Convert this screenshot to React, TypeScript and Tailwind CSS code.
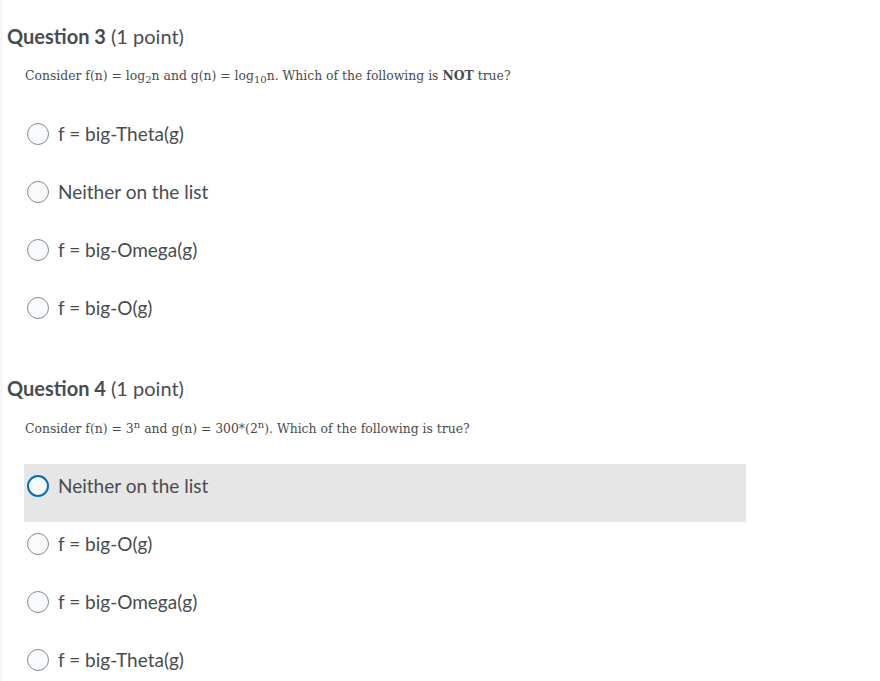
import React from "react";

type Opt = { label: string; selected?: boolean };

const q3: Opt[] = [
  { label: "f = big-Theta(g)" },
  { label: "Neither on the list" },
  { label: "f = big-Omega(g)" },
  { label: "f = big-O(g)" },
];

const q4: Opt[] = [
  { label: "Neither on the list", selected: true },
  { label: "f = big-O(g)" },
  { label: "f = big-Omega(g)" },
  { label: "f = big-Theta(g)" },
];

const Radio = ({ selected }: { selected?: boolean }) => (
  <span
    className={
      selected
        ? "block w-[22px] h-[22px] rounded-full border-2 border-[#006fbf] bg-[#f9fafb] shrink-0"
        : "block w-[22px] h-[22px] rounded-full border border-[#868c8f] bg-[#f9fafb] shrink-0"
    }
  />
);

const Option = ({ opt }: { opt: Opt }) => (
  <div
    className={`h-[58px] w-[722px] flex items-start pt-[11px] pl-[3px] ${
      opt.selected ? "bg-[#e6e6e6]" : ""
    }`}
  >
    <div className="flex items-center gap-[9px] h-[22px]">
      <Radio selected={opt.selected} />
      <span className="text-[19px] leading-[22px] text-[#494c4e]">{opt.label}</span>
    </div>
  </div>
);

const Heading = ({ n }: { n: number }) => (
  <h2 className="text-[20px] leading-[24px] text-[#494c4e] pl-[4px]">
    <span className="font-bold">Question {n}</span> (1 point)
  </h2>
);

const serif = { fontFamily: '"DejaVu Serif", serif' };

export default function App() {
  return (
    <div
      className="w-[880px] h-[681px] overflow-hidden bg-white border-l-[3px] border-[#f6f6f6]"
      style={{ fontFamily: "Lato, sans-serif" }}
    >
      <section className="pt-[24px]">
        <Heading n={3} />
        <p className="mt-[19px] ml-[22px] text-[12.4px] leading-[18px] text-[#494c4e]" style={serif}>
          Consider f(n) = log<sub className="text-[10px]">2</sub>n and g(n) = log
          <sub className="text-[10px]">10</sub>n. Which of the following is{" "}
          <b>NOT</b> true?
        </p>
        <div className="mt-[27px] ml-[21px] flex flex-col">
          {q3.map((o) => (
            <Option key={o.label} opt={o} />
          ))}
        </div>
      </section>
      <section className="pt-[32px]">
        <Heading n={4} />
        <p className="mt-[20px] ml-[22px] text-[12.4px] leading-[18px] text-[#494c4e]" style={serif}>
          Consider f(n) = 3<sup className="text-[10px]">n</sup> and g(n) = 300*(2
          <sup className="text-[10px]">n</sup>). Which of the following is true?
        </p>
        <div className="mt-[26px] ml-[21px] flex flex-col">
          {q4.map((o) => (
            <Option key={o.label} opt={o} />
          ))}
        </div>
      </section>
    </div>
  );
}
